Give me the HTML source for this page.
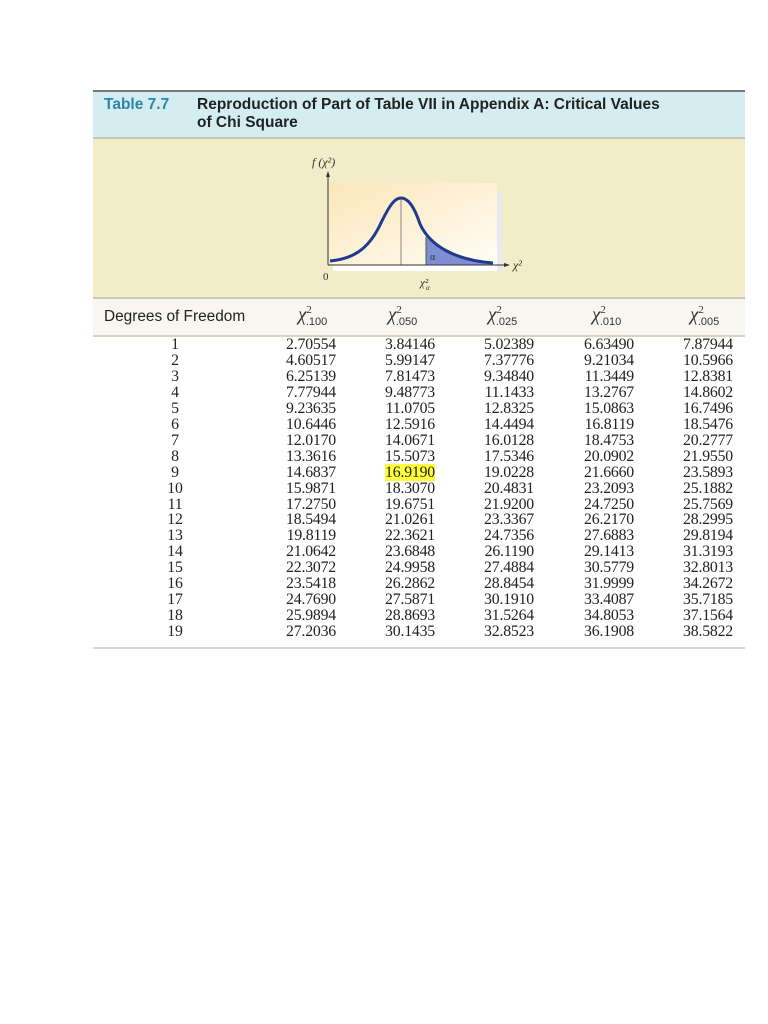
<!DOCTYPE html>
<html><head><meta charset="utf-8"><style>
body{margin:0;width:768px;height:1024px;background:#fff;position:relative;font-family:"Liberation Sans",sans-serif;}
.a{position:absolute;}
.n{position:absolute;font-family:"Liberation Serif",serif;font-size:15.8px;color:#222;white-space:nowrap;line-height:16px;letter-spacing:-0.2px;}
.h{position:absolute;font-family:"Liberation Serif",serif;font-style:italic;font-size:19px;color:#333;}
.h sub{font-style:normal;font-family:"Liberation Sans",sans-serif;font-size:11px;margin-left:-6px;}
.h sup{font-style:normal;font-size:11px;}
</style></head><body>
<div class="a" style="left:93px;top:90px;width:652px;height:2px;background:#777"></div>
<div class="a" style="left:93px;top:92px;width:652px;height:45px;background:#d3edf1"></div>
<div class="a" style="left:93px;top:137px;width:652px;height:2px;background:#c9c7b8"></div>
<div class="a" style="left:93px;top:139px;width:652px;height:158px;background:#f2ecc9"></div>
<div class="a" style="left:93px;top:297px;width:652px;height:2px;background:#cfcab8"></div>
<div class="a" style="left:93px;top:299px;width:652px;height:36px;background:#f7f6f1"></div>
<div class="a" style="left:93px;top:335px;width:652px;height:2px;background:#d8d4c4"></div>
<div class="a" style="left:93px;top:647px;width:652px;height:2px;background:#d8d8d8"></div>
<div class="a" style="left:104px;top:96px;font-size:15.5px;font-weight:bold;color:#2d86a8">Table 7.7</div>
<div class="a" style="left:197px;top:96px;font-size:15.5px;font-weight:bold;color:#222;line-height:18px">Reproduction of Part of Table VII in Appendix A: Critical Values<br>of Chi Square</div>
<svg class="a" style="left:0;top:0" width="768" height="300">
<defs><linearGradient id="g" x1="0" y1="0" x2="1" y2="1"><stop offset="0" stop-color="#fbe6b8"/><stop offset="1" stop-color="#fffdf6"/></linearGradient></defs>
<rect x="333" y="265" width="169" height="6" fill="#fff"/>
<rect x="497" y="192" width="5" height="79" fill="#e9e9ef"/>
<rect x="329" y="183" width="168" height="82" fill="url(#g)"/>
<path d="M426 237 C440 250 460 259 493 263 L493 265 L426 265 Z" fill="#7f8ed0"/>
<line x1="401" y1="198" x2="401" y2="265" stroke="#888" stroke-width="1"/>
<line x1="426" y1="237" x2="426" y2="265" stroke="#555" stroke-width="1"/>
<path d="M330 261 C352 259 368 250 380 225 C390 204 395 198 401 198 C408 198 414 206 420 224 C430 246 455 260 493 263" fill="none" stroke="#1f3a8f" stroke-width="3"/>
<line x1="328" y1="265" x2="328" y2="175" stroke="#333" stroke-width="1"/>
<path d="M326 177 L328 171 L330 177Z" fill="#333"/>
<line x1="328" y1="265" x2="506" y2="265" stroke="#333" stroke-width="1"/>
<path d="M504 263 L510 265 L504 267Z" fill="#333"/>
<text x="312" y="166" font-family="Liberation Serif" font-style="italic" font-size="12" fill="#333">f (χ²)</text>
<text x="430" y="260" font-family="Liberation Serif" font-size="10" fill="#333">α</text>
<text x="513" y="269" font-family="Liberation Serif" font-style="italic" font-size="12" fill="#333">χ²</text>
<text x="323" y="280" font-family="Liberation Serif" font-size="11" fill="#333">0</text>
<text x="420" y="286" font-family="Liberation Serif" font-style="italic" font-size="11" fill="#333">χ²</text>
<text x="426" y="290" font-family="Liberation Serif" font-style="italic" font-size="7" fill="#333">α</text>
</svg>
<div class="a" style="left:104px;top:308px;font-size:15.4px;color:#222">Degrees of Freedom</div>
<div class="h" style="left:298px;top:304px">χ<sup>2</sup><sub>.100</sub></div>
<div class="h" style="left:388px;top:304px">χ<sup>2</sup><sub>.050</sub></div>
<div class="h" style="left:488px;top:304px">χ<sup>2</sup><sub>.025</sub></div>
<div class="h" style="left:592px;top:304px">χ<sup>2</sup><sub>.010</sub></div>
<div class="h" style="left:690px;top:304px">χ<sup>2</sup><sub>.005</sub></div>
<div id="rows"></div>
<script>
var d=[["2.70554","3.84146","5.02389","6.63490","7.87944"],["4.60517","5.99147","7.37776","9.21034","10.5966"],["6.25139","7.81473","9.34840","11.3449","12.8381"],["7.77944","9.48773","11.1433","13.2767","14.8602"],["9.23635","11.0705","12.8325","15.0863","16.7496"],["10.6446","12.5916","14.4494","16.8119","18.5476"],["12.0170","14.0671","16.0128","18.4753","20.2777"],["13.3616","15.5073","17.5346","20.0902","21.9550"],["14.6837","16.9190","19.0228","21.6660","23.5893"],["15.9871","18.3070","20.4831","23.2093","25.1882"],["17.2750","19.6751","21.9200","24.7250","25.7569"],["18.5494","21.0261","23.3367","26.2170","28.2995"],["19.8119","22.3621","24.7356","27.6883","29.8194"],["21.0642","23.6848","26.1190","29.1413","31.3193"],["22.3072","24.9958","27.4884","30.5779","32.8013"],["23.5418","26.2862","28.8454","31.9999","34.2672"],["24.7690","27.5871","30.1910","33.4087","35.7185"],["25.9894","28.8693","31.5264","34.8053","37.1564"],["27.2036","30.1435","32.8523","36.1908","38.5822"]];
var R=[336,435,534,634,733],h="";
for(var i=0;i<19;i++){var y=337+i*15.95;
h+='<div class="n" style="left:155px;width:40px;text-align:center;top:'+y+'px">'+(i+1)+'</div>';
for(var j=0;j<5;j++){var s=d[i][j];if(i==8&&j==1)s='<span style="background:#ffff3a">'+s+'</span>';
h+='<div class="n" style="left:'+(R[j]-80)+'px;width:80px;text-align:right;top:'+y+'px">'+s+'</div>';}}
document.getElementById("rows").innerHTML=h;
</script>
</body></html>
